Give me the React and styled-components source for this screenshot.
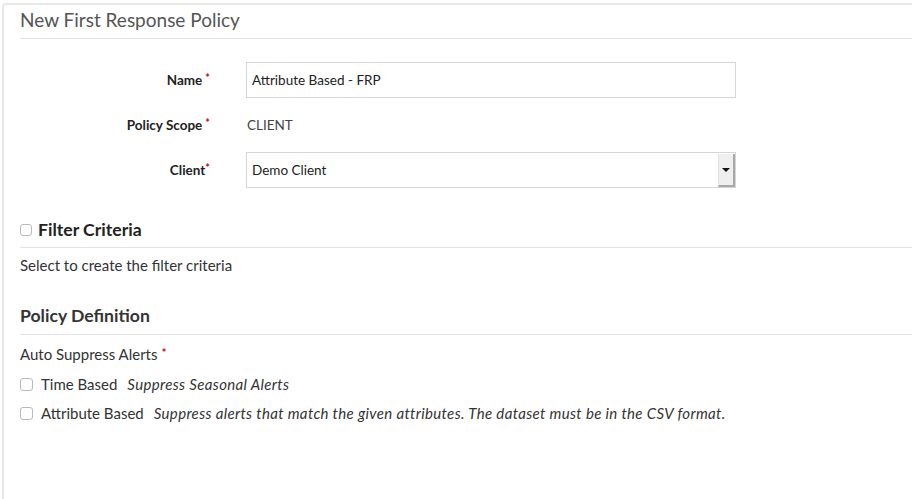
import React from 'react';
import styled, { createGlobalStyle } from 'styled-components';

const GlobalStyle = createGlobalStyle`
  html, body {
    margin: 0;
    padding: 0;
    background: #fff;
  }
  body {
    font-family: Lato, "Open Sans", sans-serif;
    color: #333;
  }
`;

const Panel = styled.div`
  margin: 3px 0 0 2px;
  height: 496px;
  box-sizing: border-box;
  border-left: 2px solid #e8e8e8;
  border-top: 2px solid #e8e8e8;
  border-top-left-radius: 4px;
  padding-left: 16px;
  overflow: hidden;
`;

const Title = styled.h1`
  margin: 0;
  padding: 3px 0 6px;
  font-size: 19px;
  line-height: 24px;
  font-weight: 400;
  color: #555;
  border-bottom: 1px solid #e3e3e3;
`;

const Form = styled.div`
  display: grid;
  grid-template-columns: 190px 490px;
  column-gap: 36px;
  row-gap: 9px;
  margin-top: 23px;
`;

const Label = styled.div`
  display: flex;
  align-items: center;
  justify-content: flex-end;
  height: 36px;
  font-size: 13.5px;
  font-weight: 700;
  color: #222;
`;

const Star = styled.span`
  color: #d0021b;
  font-size: 11px;
  font-weight: 700;
  align-self: flex-start;
  margin-top: 9px;
  margin-left: ${(p) => (p.tight ? '0' : '3px')};
`;

const TextInput = styled.div`
  height: 36px;
  box-sizing: border-box;
  border: 1px solid #d6d6d6;
  padding: 0 5px;
  display: flex;
  align-items: center;
  font-size: 13.5px;
  color: #222;
`;

const StaticValue = styled.div`
  height: 36px;
  display: flex;
  align-items: center;
  padding-left: 1px;
  font-size: 13.5px;
  color: #444;
`;

const SelectBox = styled(TextInput)`
  padding-right: 0;
  justify-content: space-between;
  align-items: stretch;
`;

const SelectValue = styled.span`
  display: flex;
  align-items: center;
`;

const ArrowButton = styled.span`
  width: 14px;
  margin: 1px 0 0;
  background: #efefef;
  border-left: 1px solid #e2e2e2;
  border-right: 2px solid #a8a8a8;
  border-bottom: 2px solid #a8a8a8;
  display: flex;
  align-items: center;
  justify-content: center;
  &::after {
    content: '';
    border-left: 4px solid transparent;
    border-right: 4px solid transparent;
    border-top: 4px solid #111;
  }
`;

const SectionHeading = styled.h2`
  display: flex;
  align-items: center;
  gap: 6px;
  margin: ${(p) => p.top}px 0 0;
  padding-bottom: ${(p) => p.pad}px;
  font-size: 17.6px;
  line-height: 24px;
  font-weight: 700;
  color: ${(p) => p.color || '#222'};
  border-bottom: 1px solid #e3e3e3;
`;

const Box = styled.span`
  width: ${(p) => p.size}px;
  height: ${(p) => p.size}px;
  box-sizing: border-box;
  border: 1px solid #b9b9b9;
  border-radius: 3px;
  background: #fff;
  flex: none;
`;

const Text = styled.div`
  margin-top: ${(p) => p.top}px;
  font-size: 15px;
  line-height: 20px;
  color: #333;
`;

const CheckRow = styled.div`
  display: flex;
  align-items: center;
  gap: 8px;
  margin-top: ${(p) => p.top}px;
  font-size: 15px;
  line-height: 20px;
  color: #333;
`;

const Hint = styled.em`
  margin-left: 2px;
  font-style: italic;
  letter-spacing: 0.35px;
  color: #333;
`;

const RedStar = styled.span`
  color: #d0021b;
  font-size: 12px;
  font-weight: 700;
  vertical-align: 3px;
  margin-left: 4px;
`;

export default function App() {
  return (
    <>
      <GlobalStyle />
      <Panel>
        <Title>New First Response Policy</Title>
        <Form>
          <Label>Name<Star>*</Star></Label>
          <TextInput>Attribute Based - FRP</TextInput>
          <Label>Policy Scope<Star>*</Star></Label>
          <StaticValue>CLIENT</StaticValue>
          <Label>Client<Star tight>*</Star></Label>
          <SelectBox>
            <SelectValue>Demo Client</SelectValue>
            <ArrowButton />
          </SelectBox>
        </Form>

        <SectionHeading top={30} pad={5}>
          <Box size={12} />
          Filter Criteria
        </SectionHeading>
        <Text top={7}>Select to create the filter criteria</Text>

        <SectionHeading top={29} pad={6} color="#333">Policy Definition</SectionHeading>
        <Text top={8}>
          Auto Suppress Alerts<RedStar>*</RedStar>
        </Text>
        <CheckRow top={10}>
          <Box size={13} />
          Time Based
          <Hint>Suppress Seasonal Alerts</Hint>
        </CheckRow>
        <CheckRow top={9}>
          <Box size={13} />
          Attribute Based
          <Hint>Suppress alerts that match the given attributes. The dataset must be in the CSV format.</Hint>
        </CheckRow>
      </Panel>
    </>
  );
}
